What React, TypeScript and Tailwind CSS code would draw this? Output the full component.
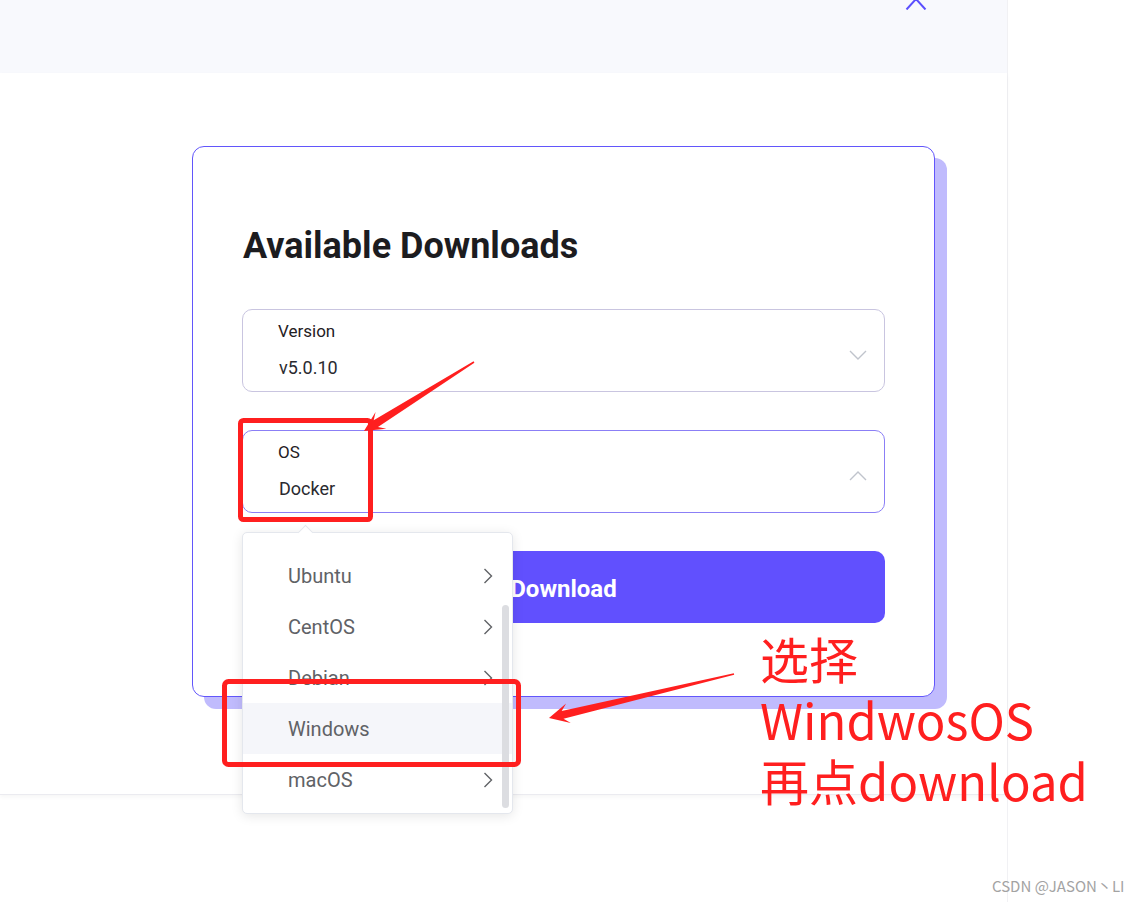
import React from "react";

function arrowPoints(tx: number, ty: number, hx: number, hy: number, L = 20, W = 10, w1 = 4, w0 = 0.8) {
  const dx = hx - tx;
  const dy = hy - ty;
  const len = Math.hypot(dx, dy);
  const ux = dx / len;
  const uy = dy / len;
  const nx = -uy;
  const ny = ux;
  const bx = hx - ux * L;
  const by = hy - uy * L;
  const sx = hx - ux * L * 0.7;
  const sy = hy - uy * L * 0.7;
  const p = [
    [tx + nx * w0, ty + ny * w0],
    [sx + nx * w1, sy + ny * w1],
    [bx + nx * W, by + ny * W],
    [hx, hy],
    [bx - nx * W, by - ny * W],
    [sx - nx * w1, sy - ny * w1],
    [tx - nx * w0, ty - ny * w0],
  ];
  return p.map(([x, y]) => `${x.toFixed(1)},${y.toFixed(1)}`).join(" ");
}

function ChevronDown() {
  return (
    <svg width="18" height="10" viewBox="0 0 18 10" fill="none">
      <polyline points="1,1 9,9 17,1" stroke="#c0c4cc" strokeWidth="1.4" />
    </svg>
  );
}

function ChevronUp() {
  return (
    <svg width="18" height="10" viewBox="0 0 18 10" fill="none">
      <polyline points="1,9 9,1 17,9" stroke="#c0c4cc" strokeWidth="1.4" />
    </svg>
  );
}

function ChevronRight() {
  return (
    <svg width="10" height="16" viewBox="0 0 10 16" fill="none">
      <polyline points="1.5,1 8.5,8 1.5,15" stroke="#606266" strokeWidth="1.4" />
    </svg>
  );
}

function SelectBox({ label, value, open }: { label: string; value: string; open?: boolean }) {
  return (
    <div
      className={
        "flex h-[83px] justify-between rounded-[10px] border bg-white pl-[35px] pr-[17px] " +
        (open ? "border-[#8b7ff6]" : "border-[#c9c5e0]")
      }
    >
      <div className="flex flex-col pt-[11px]">
        <span className="text-[17px] leading-[20px] text-[#1f2024]">{label}</span>
        <span className="mt-[15px] ml-[1px] text-[18px] leading-[24px] text-[#2a2a2f]">{value}</span>
      </div>
      <div className="mt-[9px] self-center">{open ? <ChevronUp /> : <ChevronDown />}</div>
    </div>
  );
}

const items = [
  { name: "Ubuntu", sub: true },
  { name: "CentOS", sub: true },
  { name: "Debian", sub: true },
  { name: "Windows", sub: false, active: true },
  { name: "macOS", sub: true },
];

export default function App() {
  return (
    <div className="relative h-[902px] w-[1140px] overflow-hidden bg-white font-['Roboto',sans-serif]">
      <div className="h-full w-[1008px] border-r border-[#f1f1f4]">
        <div className="flex h-[73px] justify-end bg-[#f8f9fd] pr-[80px]">
          <svg width="22" height="14" viewBox="0 0 22 14" fill="none" className="-mt-[4px]">
            <polyline points="1.5,13.5 11,3 20.5,13.5" stroke="#5b4ffe" strokeWidth="2" />
          </svg>
        </div>
        <section className="h-[722px] border-b border-[#ebebf0] pl-[192px] pt-[73px] shadow-[0_2px_4px_rgba(0,0,0,0.04)]">
          <div className="w-[743px] rounded-[12px] border border-[#6256fb] bg-white px-[49px] pb-[73px] pt-[77px] shadow-[12px_12px_0_0_#c0bbfd]">
            <h2 className="ml-[1px] text-[36px] font-bold leading-[44px] text-[#1c1c1f]">Available Downloads</h2>
            <div className="mt-[41px]">
              <SelectBox label="Version" value="v5.0.10" />
            </div>
            <div className="mt-[38px]">
              <SelectBox label="OS" value="Docker" open />
            </div>
            <button className="mt-[38px] flex h-[72px] w-full items-center justify-center rounded-[10px] bg-[#6150fe] pt-[3px] text-[24px] font-bold text-white">
              Download
            </button>
          </div>
        </section>
      </div>

      {/* dropdown menu */}
      <div className="absolute left-[242px] top-[532px] h-[282px] w-[271px] rounded-[5px] border border-[#e4e7ed] bg-white shadow-[0_2px_12px_rgba(0,0,0,0.1)]">
        <div className="absolute left-[57px] top-[-6px] h-[11px] w-[11px] rotate-45 border-l border-t border-[#e4e7ed] bg-white" />
        <div className="pt-[17px]">
          {items.map((it) => (
            <div
              key={it.name}
              className={
                "flex h-[51px] items-center justify-between pl-[45px] pr-[19px] text-[20px] text-[#606266] " +
                (it.active ? "bg-[#f5f6fa]" : "")
              }
            >
              <span>{it.name}</span>
              {it.sub ? <ChevronRight /> : null}
            </div>
          ))}
        </div>
        <div className="absolute right-[3px] top-[72px] h-[203px] w-[7px] rounded-full bg-[#dcdde1]" />
      </div>

      {/* annotations */}
      <svg className="pointer-events-none absolute left-0 top-0" width="1140" height="902" viewBox="0 0 1140 902">
        <rect x="240.5" y="420.5" width="130" height="99" rx="3" fill="none" stroke="#ff1f1f" strokeWidth="5" />
        <rect x="224.5" y="681.5" width="294" height="83" rx="4" fill="none" stroke="#ff1f1f" strokeWidth="5" />
        <polygon points={arrowPoints(474, 362, 364, 431)} fill="#ff1f1f" />
        <polygon points={arrowPoints(734, 674, 549, 718)} fill="#ff1f1f" />
      </svg>

      <div className="absolute left-[760px] top-[627px] font-['Noto_Sans_CJK_SC',sans-serif] text-[49px] leading-[61px] text-[#ff1f1f]">
        <div>选择</div>
        <div>WindwosOS</div>
        <div>再点download</div>
      </div>

      <div className="absolute left-[992px] top-[876px] font-['Noto_Sans_CJK_SC',sans-serif] text-[15px] leading-[20px] text-[#a3a3a3]">
        CSDN @JASON丶LI
      </div>
    </div>
  );
}
